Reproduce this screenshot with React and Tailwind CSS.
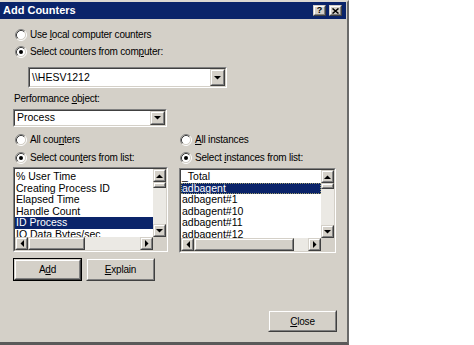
import React from 'react'

// classic win2k-style 3d edges
const Raised = ({ className = "", children }) => (
     <div className={`border border-t-[#d4d0c8] border-l-[#d4d0c8] border-r-[#404040] border-b-[#404040] bg-[#d4d0c8] ${className}`}>
          <div className="w-full h-full border border-t-white border-l-white border-r-[#808080] border-b-[#808080] flex items-center justify-center">
               {children}
          </div>
     </div>
)

const Sunken = ({ className = "", children }) => (
     <div className={`border border-t-[#808080] border-l-[#808080] border-r-white border-b-white ${className}`}>
          <div className="w-full h-full border border-t-[#404040] border-l-[#404040] border-r-[#d4d0c8] border-b-[#d4d0c8] bg-white flex overflow-hidden">
               {children}
          </div>
     </div>
)

const Arrow = ({ dir }) => {
     const pts = {
          up: "0,4 7,4 3.5,0.5",
          down: "0,0 7,0 3.5,3.5",
          left: "4,0 4,7 0.5,3.5",
          right: "0,0 0,7 3.5,3.5",
     }
     const horiz = dir === "left" || dir === "right"
     return (
          <svg width={horiz ? 4 : 7} height={horiz ? 7 : 4} viewBox={horiz ? "0 0 4 7" : "0 0 7 4"}>
               <polygon points={pts[dir]} fill="#000" />
          </svg>
     )
}

const Radio = ({ checked }) => (
     <svg width="12" height="12" viewBox="0 0 12 12" className="shrink-0">
          <circle cx="6" cy="6" r="4.6" fill="#fff" />
          <path d="M2.11 9.89 A5.5 5.5 0 0 1 9.89 2.11" stroke="#808080" fill="none" />
          <path d="M9.89 2.11 A5.5 5.5 0 0 1 2.11 9.89" stroke="#fff" fill="none" />
          <path d="M2.82 9.18 A4.5 4.5 0 0 1 9.18 2.82" stroke="#404040" fill="none" />
          <path d="M9.18 2.82 A4.5 4.5 0 0 1 2.82 9.18" stroke="#d4d0c8" fill="none" />
          {checked && <circle cx="6" cy="6" r="2" fill="#000" />}
     </svg>
)

const RadioRow = ({ checked, children, className = "" }) => (
     <div className={`flex items-center gap-[3px] h-[16px] ${className}`}>
          <Radio checked={checked} />
          <span className="leading-none whitespace-nowrap">{children}</span>
     </div>
)

const Combo = ({ value, className = "" }) => (
     <Sunken className={className}>
          <div className="flex-1 flex items-center pl-[2px] whitespace-nowrap text-[10.5px] tracking-normal">{value}</div>
          <Raised className="w-[15px] h-full">
               <Arrow dir="down" />
          </Raised>
     </Sunken>
)

const VScroll = () => (
     <div className="w-[13px] flex flex-col bg-[#ebe9e4]">
          <Raised className="h-[13px]"><Arrow dir="up" /></Raised>
          <Raised className="h-[6px]" />
          <div className="flex-1" />
          <Raised className="h-[13px]"><Arrow dir="down" /></Raised>
     </div>
)

const HScroll = ({ thumb }) => (
     <div className="flex-1 flex bg-[#ebe9e4]">
          <Raised className="w-[13px]"><Arrow dir="left" /></Raised>
          <Raised className={thumb} />
          <div className="flex-1" />
          <Raised className="w-[13px]"><Arrow dir="right" /></Raised>
     </div>
)

const ListBox = ({ items, selected, focus, thumb, pad }) => (
     <Sunken className="h-[85px]">
          <div className="flex flex-col flex-1 min-w-0">
               <div className="flex flex-1 min-h-0">
                    <div className={`flex-1 min-w-0 overflow-hidden text-[10.5px] tracking-normal ${pad}`}>
                         {items.map((it, i) => (
                              <div
                                   key={i}
                                   className={`h-[11.5px] leading-[11.5px] pl-[1px] whitespace-nowrap ${i === selected ? 'bg-[#0a246a] text-white' : ''} ${i === selected && focus ? 'outline outline-dotted -outline-offset-1 outline-[#9c9a6a]' : ''}`}
                              >
                                   {it}
                              </div>
                         ))}
                    </div>
                    <VScroll />
               </div>
               <div className="flex h-[13px]">
                    <HScroll thumb={thumb} />
                    <div className="w-[13px] bg-[#d4d0c8]" />
               </div>
          </div>
     </Sunken>
)

const Button = ({ children, isDefault, className = "" }) => (
     isDefault ? (
          <div className={`border border-black ${className}`}>
               <Raised className="w-full h-full">{children}</Raised>
          </div>
     ) : (
          <Raised className={className}>{children}</Raised>
     )
)

const counters = ["% User Time", "Creating Process ID", "Elapsed Time", "Handle Count", "ID Process", "IO Data Bytes/sec"]
const instances = ["_Total", "adbagent", "adbagent#1", "adbagent#10", "adbagent#11", "adbagent#12"]

export default function App() {
     return (
          <div className="w-[474px] h-[345px] bg-white flex items-start text-[10px] tracking-[-0.2px] text-black font-['Liberation_Sans',Arial,sans-serif]">
               <div className="w-[349px] h-[345px] bg-[#d4d0c8] border-t-2 border-t-[#dcd9d2] border-r-2 border-r-[#6a6a6a] border-b-[3px] border-b-[#5a5a5a] flex flex-col">

                    {/* Title bar */}
                    <div className="h-[17px] mr-[1px] bg-[#0a246a] flex items-center justify-between pl-[3px] pr-[4px]">
                         <span className="text-white font-bold text-[11px] tracking-normal leading-none">Add Counters</span>
                         <div className="flex gap-[3px]">
                              <Raised className="w-[13px] h-[11px]">
                                   <span className="font-bold text-[9px] leading-none">?</span>
                              </Raised>
                              <Raised className="w-[13px] h-[11px]">
                                   <svg width="7" height="6" viewBox="0 0 7 6">
                                        <path d="M0.5 0.5 L6.5 5.5 M6.5 0.5 L0.5 5.5" stroke="#000" strokeWidth="1.5" />
                                   </svg>
                              </Raised>
                         </div>
                    </div>

                    {/* Computer source */}
                    <RadioRow className="mt-[8px] ml-[15px]">Use <u>l</u>ocal computer counters</RadioRow>
                    <RadioRow checked className="mt-[1px] ml-[15px]">Select counters from com<u>p</u>uter:</RadioRow>
                    <Combo value={"\\\\HESV1212"} className="mt-[7px] ml-[28px] w-[199px] h-[21px]" />

                    {/* Performance object */}
                    <div className="mt-[4px] ml-[14px] h-[13px] leading-[13px]">Performance <u>o</u>bject:</div>
                    <Combo value="Process" className="mt-[4px] ml-[13px] w-[154px] h-[18px]" />

                    {/* Counters and instances */}
                    <div className="mt-[5px] ml-[13px] flex gap-[11px]">
                         <div className="w-[155px] flex flex-col">
                              <RadioRow className="ml-[2px]">All cou<u>n</u>ters</RadioRow>
                              <RadioRow checked className="ml-[2px] mt-[2px]">Select coun<u>t</u>ers from list:</RadioRow>
                              <div className="mt-[1px]">
                                   <ListBox items={counters} selected={4} thumb="flex-1" pad="pt-[2px]" />
                              </div>
                         </div>
                         <div className="w-[157px] flex flex-col">
                              <RadioRow className="ml-[1px]"><u>A</u>ll instances</RadioRow>
                              <RadioRow checked className="ml-[1px] mt-[2px]">Select <u>i</u>nstances from list:</RadioRow>
                              <div className="mt-[2px]">
                                   <ListBox items={instances} selected={1} focus thumb="w-[100px]" pad="pt-[1px]" />
                              </div>
                         </div>
                    </div>

                    {/* Add / Explain */}
                    <div className="mt-[5px] ml-[13px] flex gap-[4px]">
                         <Button isDefault className="w-[69px] h-[23px]">A<u>d</u>d</Button>
                         <Button className="w-[69px] h-[23px]"><u>E</u>xplain</Button>
                    </div>

                    {/* Close */}
                    <div className="mt-[29px] flex justify-end pr-[10px]">
                         <Button className="w-[69px] h-[22px]"><u>C</u>lose</Button>
                    </div>
               </div>
          </div>
     )
}
